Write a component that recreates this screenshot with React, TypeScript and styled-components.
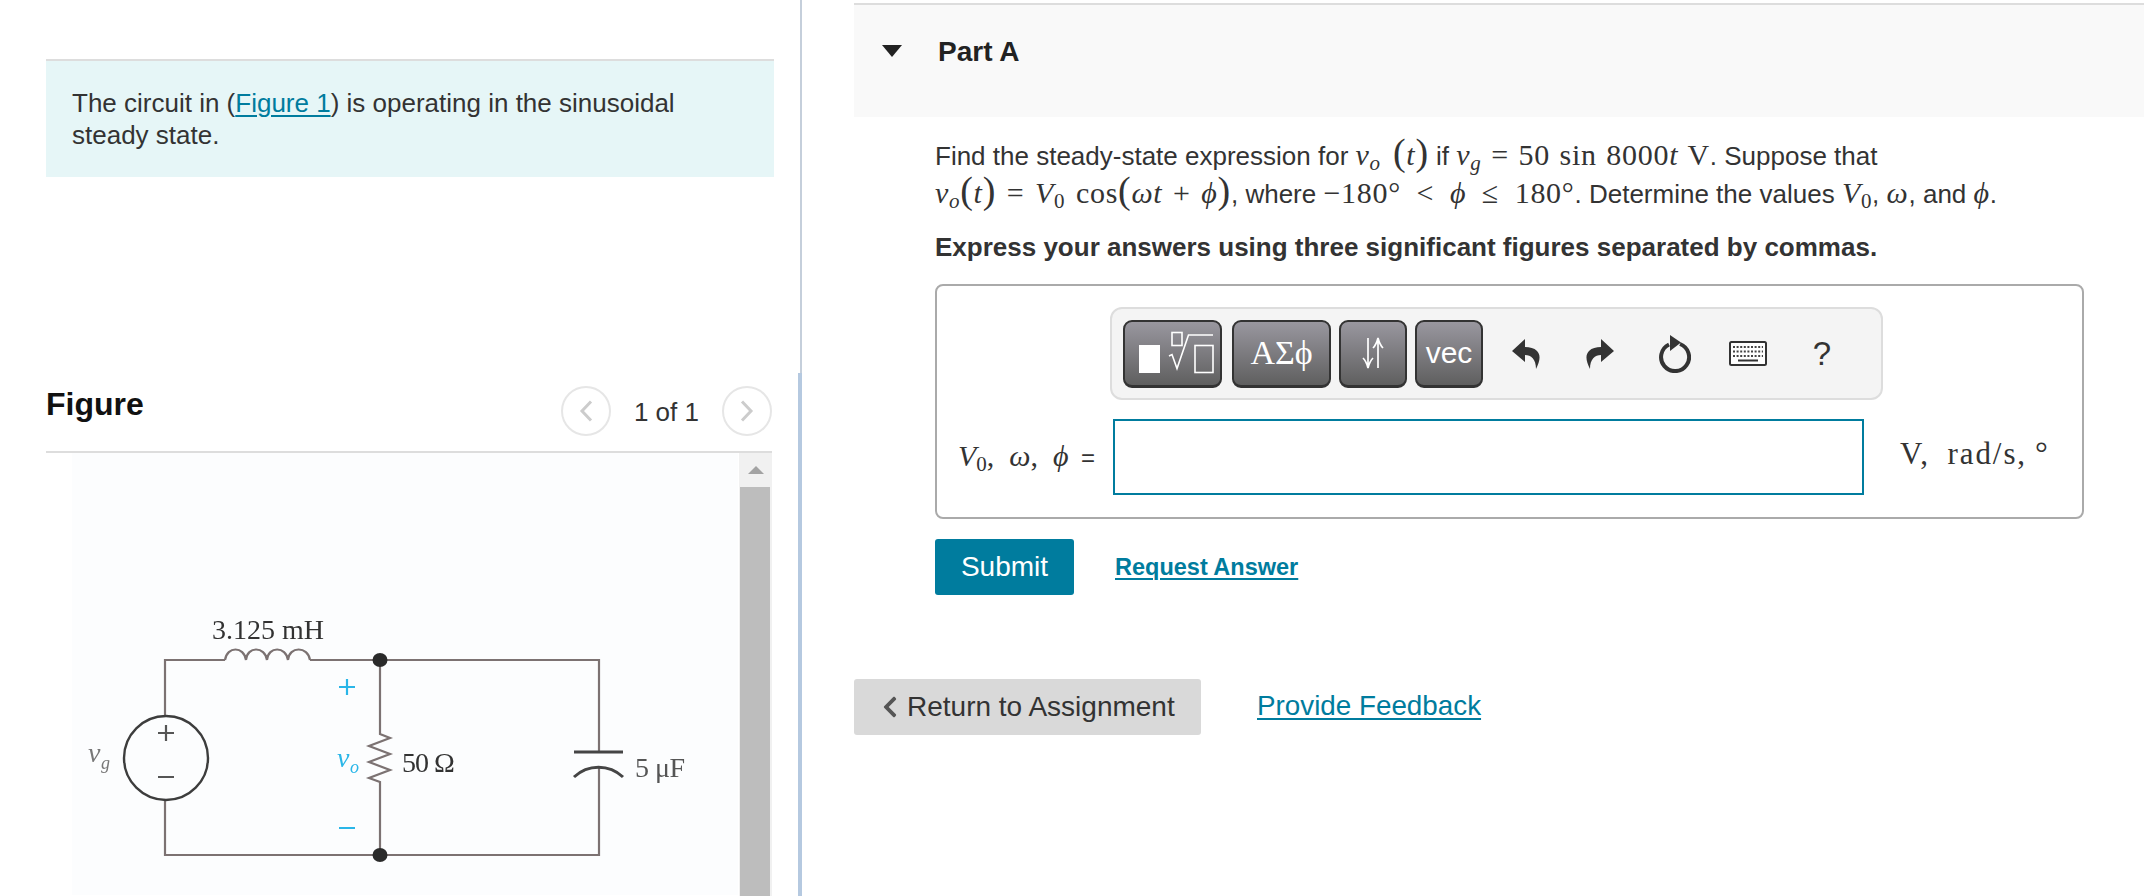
import React from 'react';
import styled, { createGlobalStyle } from 'styled-components';
import { FaChevronLeft } from 'react-icons/fa';

const teal = '#007c9e';
const sans = '"Liberation Sans", Arial, sans-serif';
const serif = '"Liberation Serif", "Times New Roman", serif';

const GlobalStyle = createGlobalStyle`
  html, body {
    margin: 0;
    padding: 0;
    background: #fff;
    overflow: hidden;
  }
`;

const Page = styled.div`
  display: grid;
  grid-template-columns: 798px 4px 1fr;
  width: 2144px;
  height: 896px;
  overflow: hidden;
  color: #333;
  font-family: ${sans};
  font-size: 26px;
`;

const LeftPane = styled.section`
  display: flex;
  flex-direction: column;
  padding: 59px 24px 0 46px;
  min-width: 0;
`;

const Intro = styled.div`
  height: 118px;
  padding: 26px 26px 0;
  box-sizing: border-box;
  border-top: 2px solid #ddd;
  background: #e6f6f7;
  line-height: 32px;
  color: #333;
`;

const Link = styled.a`
  color: ${teal};
  text-decoration: underline;
  text-decoration-thickness: 2px;
  text-underline-offset: 3px;
`;

const FigureBar = styled.div`
  display: flex;
  align-items: flex-start;
  height: 276px;
  margin-right: 2px;
  padding-top: 209px;
  box-sizing: border-box;
  border-bottom: 2px solid #ddd;
`;

const FigureTitle = styled.h2`
  flex: 1;
  margin: 0;
  color: #111;
  font-size: 32px;
  line-height: 36px;
  font-weight: bold;
`;

const Pager = styled.div`
  display: flex;
  align-items: center;
  gap: 23px;
`;

const PagerButton = styled.div`
  display: flex;
  align-items: center;
  justify-content: center;
  width: 50px;
  height: 50px;
  box-sizing: border-box;
  border: 2px solid #e6e6e6;
  border-radius: 50%;
`;

const PagerCount = styled.span`
  margin-top: 2px;
  font-size: 26px;
`;

const FigureView = styled.div`
  display: flex;
  flex: 1;
  min-height: 0;
  margin-right: 2px;
`;

const FigureImage = styled.div`
  flex: 1;
  min-width: 0;
  overflow: hidden;
`;

const CircuitSvg = styled.svg`
  display: block;
`;

const Scrollbar = styled.div`
  display: flex;
  flex-direction: column;
  align-items: center;
  width: 33px;
  background: #f1f1f1;
`;

const ScrollUp = styled.div`
  flex: none;
  width: 0;
  height: 0;
  margin: 13px 0 13px;
  border-left: 8px solid transparent;
  border-right: 8px solid transparent;
  border-bottom: 8px solid #a3a3a3;
`;

const ScrollThumb = styled.div`
  flex: 1;
  width: 30px;
  margin-right: 2px;
  background: #bdbdbd;
`;

const Divider = styled.div`
  display: flex;
  justify-content: flex-end;
  padding-top: 373px;
  box-shadow: inset -2px 0 0 #c5cfdb;
`;

const DividerHandle = styled.div`
  width: 4px;
  background: #b5c9e0;
`;

const RightPane = styled.section`
  padding: 3px 0 0 52px;
  min-width: 0;
`;

const PartHeader = styled.header`
  display: flex;
  height: 114px;
  padding: 29px 0 0 28px;
  box-sizing: border-box;
  border-top: 2px solid #ddd;
  background: #f9f9f9;
`;

const Caret = styled.span`
  width: 0;
  height: 0;
  margin: 11px 36px 0 0;
  border-left: 10px solid transparent;
  border-right: 10px solid transparent;
  border-top: 12px solid #222;
`;

const PartTitle = styled.h3`
  margin: 0;
  color: #222;
  font-size: 28px;
  line-height: 36px;
  font-weight: bold;
`;

const Body = styled.div`
  padding: 0 60px 0 81px;
`;

const Prompt = styled.div`
  padding-top: 19px;
  font-size: 26px;
`;

const PromptLine = styled.div`
  height: 38px;
  line-height: 38px;
  white-space: nowrap;
`;

const Instruction = styled.p`
  margin: 17px 0 0;
  color: #333;
  font-size: 26px;
  line-height: 36px;
  font-weight: bold;
  white-space: nowrap;
`;

const Math = styled.span<{ $spacing?: number }>`
  font-family: ${serif};
  font-size: 30px;
  letter-spacing: 0.7px;
  word-spacing: ${p => p.$spacing ?? 4}px;
  white-space: pre;
`;

const Var = styled.i`
  font-family: ${serif};
  font-style: italic;
`;

const Sub = styled.sub`
  font-size: 0.7em;
  line-height: 0;
  vertical-align: -0.25em;
`;

const BigParen = styled.span`
  font-family: ${serif};
  font-size: 38px;
  font-weight: normal;
  line-height: 0;
`;

const AnswerBox = styled.div`
  margin-top: 19px;
  height: 235px;
  padding: 21px 21px 0;
  box-sizing: border-box;
  border: 2px solid #aaa;
  border-radius: 8px;
`;

const Toolbar = styled.div`
  display: flex;
  align-items: center;
  width: 773px;
  height: 93px;
  margin-left: 152px;
  padding-left: 11px;
  box-sizing: border-box;
  border: 2px solid #ddd;
  border-radius: 12px;
  background: #f4f4f4;
`;

const ToolButton = styled.div<{ $w: number; $gap: number }>`
  display: flex;
  align-items: center;
  justify-content: center;
  width: ${p => p.$w}px;
  height: 68px;
  margin-right: ${p => p.$gap}px;
  box-sizing: border-box;
  border: 2px solid #333;
  border-bottom-width: 3px;
  border-radius: 9px;
  background: linear-gradient(#99979f, #5f5f5f);
  color: #fff;
`;

const SymbolText = styled.span`
  font-family: ${serif};
  font-size: 34px;
`;

const VecText = styled.span`
  font-family: ${sans};
  font-size: 30px;
`;

const ToolIcon = styled.div`
  display: flex;
  align-items: center;
  justify-content: center;
  width: 74px;
  color: #333;
`;

const HelpMark = styled.span`
  font-size: 33px;
  color: #333;
`;

const AnswerRow = styled.div`
  display: flex;
  align-items: center;
  margin-top: 19px;
`;

const AnswerLabel = styled.label`
  width: 155px;
  flex: none;
  margin-bottom: 3px;
  font-family: ${serif};
  font-size: 30px;
  white-space: pre;
`;

const Equals = styled.span`
  margin-left: 5px;
  font-family: ${sans};
  font-size: 24px;
`;

const AnswerInput = styled.input`
  width: 751px;
  height: 76px;
  box-sizing: border-box;
  border: 2px solid ${teal};
  border-radius: 0;
  outline: none;
  background: #fff;
`;

const Units = styled.span`
  margin: 0 0 8px 36px;
  font-family: ${serif};
  font-size: 31px;
  letter-spacing: 1.9px;
  white-space: pre;
  word-spacing: 8px;
`;

const Degree = styled.span`
  position: relative;
  top: 0;
  font-size: 32px;
  margin-left: 8px;
`;

const Actions = styled.div`
  display: flex;
  align-items: center;
  margin-top: 20px;
`;

const SubmitButton = styled.button`
  width: 139px;
  height: 56px;
  padding: 0;
  border: none;
  border-radius: 3px;
  background: ${teal};
  color: #fff;
  font-family: ${sans};
  font-size: 28px;
`;

const RequestLink = styled(Link)`
  margin-left: 41px;
  font-size: 23.5px;
  font-weight: bold;
`;

const Footer = styled.div`
  display: flex;
  align-items: flex-start;
  margin-top: 84px;
`;

const ReturnButton = styled.button`
  display: flex;
  align-items: center;
  gap: 5px;
  width: 347px;
  height: 56px;
  padding: 0 0 0 24px;
  box-sizing: border-box;
  border: none;
  border-radius: 3px;
  background: #d9d9d9;
  color: #333;
  font-family: ${sans};
  font-size: 28px;
`;

const FeedbackLink = styled(Link)`
  margin: 11px 0 0 56px;
  font-size: 27.8px;
`;

const PagerChevron = ({ dir }: { dir: 'left' | 'right' }) => (
  <svg width="14" height="22" viewBox="0 0 14 22" fill="none" stroke="#ccc" strokeWidth="3">
    <path d={dir === 'left' ? 'M12 1.5 3 11l9 9.5' : 'M2 1.5 11 11l-9 9.5'} />
  </svg>
);

const TemplateIcon = () => (
  <svg width="90" height="44" viewBox="1127 331 90 44" fill="none" stroke="#fff" strokeWidth="1.6">
    <rect x="1138" y="345" width="21" height="28" fill="#fff" stroke="none" />
    <rect x="1171" y="332.5" width="10" height="13" />
    <path d="M1168 356l3-1.5 5 14 11.5-33.5H1212" />
    <rect x="1194" y="345.5" width="18" height="27" />
  </svg>
);

const ArrowsIcon = () => (
  <svg width="22" height="32" viewBox="0 0 22 32" fill="none" stroke="#fff" strokeWidth="1.7">
    <path d="M6 1v29M1 21c3 3 4 6 5 10 1-4 2-7 5-10" />
    <path d="M16 31V2M11 11c3-3 4-6 5-10 1 4 2 7 5 10" />
  </svg>
);

const UndoIcon = ({ flip }: { flip?: boolean }) => (
  <svg width="28" height="30" viewBox="0 0 28 30" fill="#333">
    <path
      transform={flip ? 'matrix(-1 0 0 1 28 0)' : undefined}
      d="M13 0 0 12l13 11v-7c6 0 11 4 11 14 4-8 5-14 1-18-3-3-7-4-12-4z"
    />
  </svg>
);

const ResetIcon = () => (
  <svg width="34" height="38" viewBox="0 0 34 38" fill="none">
    <path d="M12 9.5A14 14 0 1 0 23 9" stroke="#333" strokeWidth="4" />
    <path d="M13 0l11 7.5L13 16z" fill="#333" />
  </svg>
);

const KeyboardIcon = () => (
  <svg width="38" height="25" viewBox="0 0 38 25">
    <rect x="1" y="1" width="36" height="23" rx="1.5" fill="#fff" stroke="#333" strokeWidth="2" />
    <path d="M4 6h30M4 10.5h30M4 15h30" stroke="#444" strokeWidth="2" strokeDasharray="2 1.6" />
    <path d="M9 19.5h20" stroke="#333" strokeWidth="2" />
  </svg>
);

const Circuit = () => (
  <CircuitSvg width="692" height="442" viewBox="46 454 692 442">
    <defs>
      <filter id="soft" x="-5%" y="-5%" width="110%" height="110%">
        <feGaussianBlur stdDeviation="0.45" />
      </filter>
    </defs>
    <rect x="72" y="454" width="666" height="442" fill="#fcfdfe" />
    <g filter="url(#soft)" fill="none" stroke="#7b7272" strokeWidth="2.2">
      <path d="M165 717V661H225M310 661H599V753M599 768V856H165V801" />
      <path d="M225 661c2-14 19-14 21 0 1-14 19-14 21 0 1-14 19-14 21 0 1-14 20-14 22 0" />
      <path d="M380 661V735l10 4-21 8 21 8-21 8 21 8-21 8 11 4V856" />
      <circle cx="166" cy="759" r="42" stroke="#3c3c3c" strokeWidth="2.4" />
      <path d="M158 734h16M166 726v16M158 778h16" stroke="#555" />
      <path d="M574 753h49" stroke="#444" strokeWidth="3" />
      <path d="M574 778c14-13 35-13 49 0" stroke="#444" strokeWidth="3" />
      <path d="M339 688h16M347 680v16M339 829h16" stroke="#29b6e8" />
      <ellipse cx="380" cy="661" rx="7.5" ry="7" fill="#2b2b2b" stroke="none" />
      <ellipse cx="380" cy="856" rx="7.5" ry="7" fill="#2b2b2b" stroke="none" />
      <g fill="#333" stroke="none" fontFamily={serif} fontSize="28">
        <text x="212" y="640">3.125 mH</text>
        <text x="402" y="773" letterSpacing="-1">50 Ω</text>
        <text x="635" y="778" fill="#555" letterSpacing="-0.5">5 μF</text>
        <text x="88" y="763" fontStyle="italic" fill="#777">v</text>
        <text x="101" y="770" fontStyle="italic" fill="#777" fontSize="18">g</text>
        <text x="337" y="768" fontStyle="italic" fill="#29b6e8">v</text>
        <text x="350" y="774" fontStyle="italic" fill="#29b6e8" fontSize="18">o</text>
      </g>
    </g>
  </CircuitSvg>
);

const App = () => (
  <Page>
    <GlobalStyle />
    <LeftPane>
      <Intro>
        The circuit in (<Link href="#">Figure 1</Link>) is operating in the sinusoidal
        <br />
        steady state.
      </Intro>
      <FigureBar>
        <FigureTitle>Figure</FigureTitle>
        <Pager>
          <PagerButton>
            <PagerChevron dir="left" />
          </PagerButton>
          <PagerCount>1 of 1</PagerCount>
          <PagerButton>
            <PagerChevron dir="right" />
          </PagerButton>
        </Pager>
      </FigureBar>
      <FigureView>
        <FigureImage>
          <Circuit />
        </FigureImage>
        <Scrollbar>
          <ScrollUp />
          <ScrollThumb />
        </Scrollbar>
      </FigureView>
    </LeftPane>
    <Divider>
      <DividerHandle />
    </Divider>
    <RightPane>
      <PartHeader>
        <Caret />
        <PartTitle>Part A</PartTitle>
      </PartHeader>
      <Body>
        <Prompt>
          <PromptLine>
            Find the steady-state expression for{' '}
            <Math>
              <Var>v</Var>
              <Sub>
                <Var>o</Var>
              </Sub>{' '}
              <BigParen>(</BigParen>
              <Var>t</Var>
              <BigParen>)</BigParen>
            </Math>{' '}
            if{' '}
            <Math $spacing={1.5}>
              <Var>v</Var>
              <Sub>
                <Var>g</Var>
              </Sub>
              {' = 50 sin 8000'}
              <Var>t</Var> V
            </Math>
            . Suppose that
          </PromptLine>
          <PromptLine>
            <Math $spacing={2.5}>
              <Var>v</Var>
              <Sub>
                <Var>o</Var>
              </Sub>
              <BigParen>(</BigParen>
              <Var>t</Var>
              <BigParen>)</BigParen>
              {' = '}
              <Var>V</Var>
              <Sub>0</Sub>
              {' cos'}
              <BigParen>(</BigParen>
              <Var>ωt</Var>
              {' + '}
              <Var>ϕ</Var>
              <BigParen>)</BigParen>
            </Math>
            , where{' '}
            <Math $spacing={7.5}>
              {'−180° < '}
              <Var>ϕ</Var>
              {' ≤ 180°'}
            </Math>
            . Determine the values{' '}
            <Math>
              <Var>V</Var>
              <Sub>0</Sub>
            </Math>
            ,{' '}
            <Math>
              <Var>ω</Var>
            </Math>
            , and{' '}
            <Math>
              <Var>ϕ</Var>
            </Math>
            .
          </PromptLine>
        </Prompt>
        <Instruction>Express your answers using three significant figures separated by commas.</Instruction>
        <AnswerBox>
          <Toolbar>
            <ToolButton $w={99} $gap={10}>
              <TemplateIcon />
            </ToolButton>
            <ToolButton $w={99} $gap={8}>
              <SymbolText>ΑΣϕ</SymbolText>
            </ToolButton>
            <ToolButton $w={68} $gap={8}>
              <ArrowsIcon />
            </ToolButton>
            <ToolButton $w={68} $gap={6}>
              <VecText>vec</VecText>
            </ToolButton>
            <ToolIcon>
              <UndoIcon />
            </ToolIcon>
            <ToolIcon>
              <UndoIcon flip />
            </ToolIcon>
            <ToolIcon>
              <ResetIcon />
            </ToolIcon>
            <ToolIcon>
              <KeyboardIcon />
            </ToolIcon>
            <ToolIcon>
              <HelpMark>?</HelpMark>
            </ToolIcon>
          </Toolbar>
          <AnswerRow>
            <AnswerLabel>
              <Var>V</Var>
              <Sub>0</Sub>
              {',  '}
              <Var>ω</Var>
              {',  '}
              <Var>ϕ</Var> <Equals>=</Equals>
            </AnswerLabel>
            <AnswerInput />
            <Units>
              V, rad/s,<Degree>°</Degree>
            </Units>
          </AnswerRow>
        </AnswerBox>
        <Actions>
          <SubmitButton>Submit</SubmitButton>
          <RequestLink href="#">Request Answer</RequestLink>
        </Actions>
      </Body>
      <Footer>
        <ReturnButton>
          <FaChevronLeft size={24} color="#555" />
          Return to Assignment
        </ReturnButton>
        <FeedbackLink href="#">Provide Feedback</FeedbackLink>
      </Footer>
    </RightPane>
  </Page>
);

export default App;
